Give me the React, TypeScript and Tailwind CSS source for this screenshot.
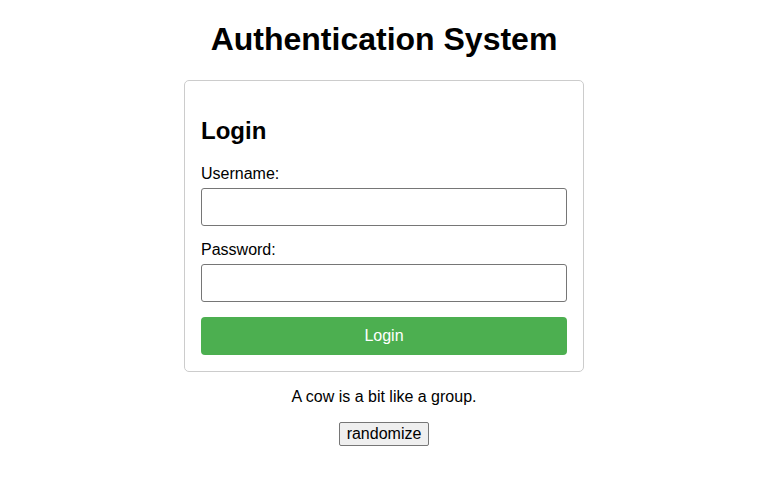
import React, { useState } from "react"

const facts = [
  "A cow is a bit like a group.",
  "A dog is a bit like a friend.",
  "A cat is a bit like a cloud.",
]

const App: React.FC = () => {
  const [username, setUsername] = useState("")
  const [password, setPassword] = useState("")
  const [fact, setFact] = useState(0)

  return (
    <div className="min-h-[480px] bg-white text-black font-['Liberation_Sans',Arial,sans-serif] flex flex-col items-center">
      <h1 className="mt-[21px] mb-[22px] text-[32px] leading-[37px] font-bold">Authentication System</h1>

      <div className="w-[400px] border border-[#ccc] rounded-[5px] px-4 pb-4 pt-4">
        <h2 className="mt-5 mb-5 text-[24px] leading-[28px] font-bold">Login</h2>
        <form
          onSubmit={(e) => {
            e.preventDefault()
          }}
        >
          <label className="block mb-[5px] text-[16px] leading-[18px]">Username:</label>
          <input
            type="text"
            value={username}
            onChange={(e) => setUsername(e.target.value)}
            className="block w-full h-[38px] px-2 border border-[#767676] rounded-[3px] text-[16px] mb-[15px]"
          />
          <label className="block mb-[5px] text-[16px] leading-[18px]">Password:</label>
          <input
            type="password"
            value={password}
            onChange={(e) => setPassword(e.target.value)}
            className="block w-full h-[38px] px-2 border border-[#767676] rounded-[3px] text-[16px] mb-[15px]"
          />
          <button
            type="submit"
            className="block w-full h-[38px] bg-[#4caf50] text-white text-[16px] rounded-[4px]"
          >
            Login
          </button>
        </form>
      </div>

      <p className="mt-4 mb-4 text-[16px] leading-[18px]">{facts[fact]}</p>
      <button
        onClick={() => setFact((fact + 1) % facts.length)}
        className="h-[24px] px-[7px] bg-[#efefef] border border-[#767676] rounded-[2px] text-[16px] leading-[18px]"
      >
        randomize
      </button>
    </div>
  )
}

export default App
